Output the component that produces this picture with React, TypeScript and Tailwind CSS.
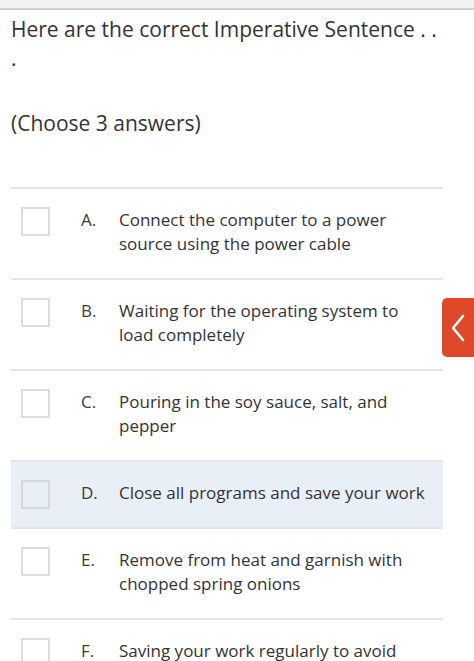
import { useState } from 'react';

type Choice = { key: string; text: string };

const choices: Choice[] = [
  { key: 'A', text: 'Connect the computer to a power source using the power cable' },
  { key: 'B', text: 'Waiting for the operating system to load completely' },
  { key: 'C', text: 'Pouring in the soy sauce, salt, and pepper' },
  { key: 'D', text: 'Close all programs and save your work' },
  { key: 'E', text: 'Remove from heat and garnish with chopped spring onions' },
  { key: 'F', text: 'Saving your work regularly to avoid losing data' },
];

const ChoiceRow = ({ choice, hover }: { choice: Choice; hover: boolean }) => (
  <div
    className={`flex items-start border-t-2 border-[#e4e4e4] pt-[18px] pb-[18px] ${
      hover ? 'bg-[#e9eff6]' : 'bg-white'
    }`}
  >
    <div
      className={`ml-[10px] w-[29px] h-[29px] shrink-0 border-2 ${
        hover ? 'border-[#d6d9dc]' : 'border-[#dcdcdc]'
      } bg-transparent`}
    ></div>
    <div className="ml-[31px] w-[38px] shrink-0 pt-[1px] text-[17px] leading-[24px] text-[#3a3a3a]">
      {choice.key}.
    </div>
    <div className="flex-1 pt-[1px] pb-[4px] pr-[8px] text-[17px] leading-[24px] text-[#333]">
      {choice.text}
    </div>
  </div>
);

export default function App() {
  const [hovered] = useState('D');

  return (
    <div
      className="relative w-[474px] h-[661px] overflow-hidden bg-white"
      style={{ fontFamily: '"Open Sans", "Noto Sans", sans-serif' }}
    >
      <div className="h-[10px] bg-[#f1f1f1] border-b-2 border-[#d3d6d8]"></div>

      <div className="px-[11px]">
        <p className="pt-[5px] text-[21px] leading-[29px] text-[#333]">
          Here are the correct Imperative Sentence . .
          <br />.
        </p>
        <p className="mt-[36px] text-[21px] leading-[29px] text-[#333]">(Choose 3 answers)</p>

        <div className="mt-[49px] w-[432px]">
          {choices.map((c) => (
            <ChoiceRow key={c.key} choice={c} hover={c.key === hovered} />
          ))}
        </div>
      </div>

      {/* side drawer tab */}
      <button className="absolute right-0 top-[298px] w-[32px] h-[59px] rounded-l-[5px] bg-[#e0482a] flex items-center justify-center">
        <svg width="16" height="28" viewBox="0 0 16 28" fill="none">
          <path d="M13 2 L3 14 L13 26" stroke="white" strokeWidth="2.6" strokeLinecap="round" strokeLinejoin="round" />
        </svg>
      </button>
    </div>
  );
}
